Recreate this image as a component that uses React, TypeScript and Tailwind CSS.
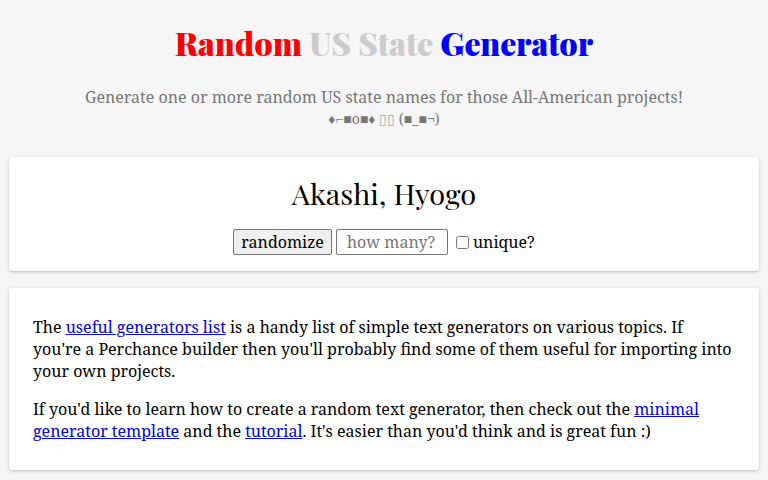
export default function App() {
  return (
    <div className="min-h-screen bg-[#f6f6f6] text-black" style={{ fontFamily: '"Noto Serif", serif' }}>
      {/* Header */}
      <div className="pt-[21px] text-center">
        <h1 className="text-[32px] font-black leading-[44px]" style={{ fontFamily: '"Playfair Display", serif' }}>
          <span className="text-[#ff0000]">Random</span>{" "}
          <span className="text-[#cccccc]">US State</span>{" "}
          <span className="text-[#0000ff]">Generator</span>
        </h1>
        <p className="mt-[21px] text-[16px] leading-[22px] text-[#777777]">
          Generate one or more random US state names for those All-American projects!
        </p>
        <p className="mt-[2px] text-[14px] leading-[18px] text-[#777777]">
          ♦⌐■o■♦ <span className="text-[#aaaaaa]">▯▯</span> (■_■¬)
        </p>
      </div>

      {/* Output card */}
      <div className="mx-[9px] mt-[29px] rounded-[3px] bg-white pt-[14px] pb-[16px] text-center shadow-[0_1px_3px_rgba(0,0,0,0.25)]">
        <div className="text-[29px] leading-[44px]" style={{ fontFamily: '"Playfair Display", serif' }}>
          Akashi, Hyogo
        </div>
        <div className="mt-[14px] flex items-center justify-center text-[16px]">
          <button className="rounded-[2px] border border-[#767676] bg-[#efefef] px-[7px] py-[1px] leading-[22px]">randomize</button>
          <input
            placeholder="how many?"
            className="ml-[4px] w-[112px] rounded-[2px] border border-[#767676] bg-white px-[10px] py-[1px] leading-[22px] placeholder:text-[#757575]"
          />
          <label className="ml-[8px] flex items-center gap-[4px]">
            <input type="checkbox" className="h-[13px] w-[13px]" />
            unique?
          </label>
        </div>
      </div>

      {/* Info card */}
      <div className="mx-[9px] mt-[17px] rounded-[3px] bg-white px-[24px] py-[12px] text-[16px] leading-[22px] shadow-[0_1px_3px_rgba(0,0,0,0.25)]">
        <p className="my-[16px]">
          The <a href="#" className="text-[#0000ee] underline">useful generators list</a> is a handy list of simple text generators on various topics. If you're a Perchance builder then you'll probably find some of them useful for importing into your own projects.
        </p>
        <p className="my-[16px]">
          If you'd like to learn how to create a random text generator, then check out the{" "}
          <a href="#" className="text-[#0000ee] underline">minimal generator template</a> and the{" "}
          <a href="#" className="text-[#0000ee] underline">tutorial</a>. It's easier than you'd think and is great fun :)
        </p>
      </div>
    </div>
  );
}
